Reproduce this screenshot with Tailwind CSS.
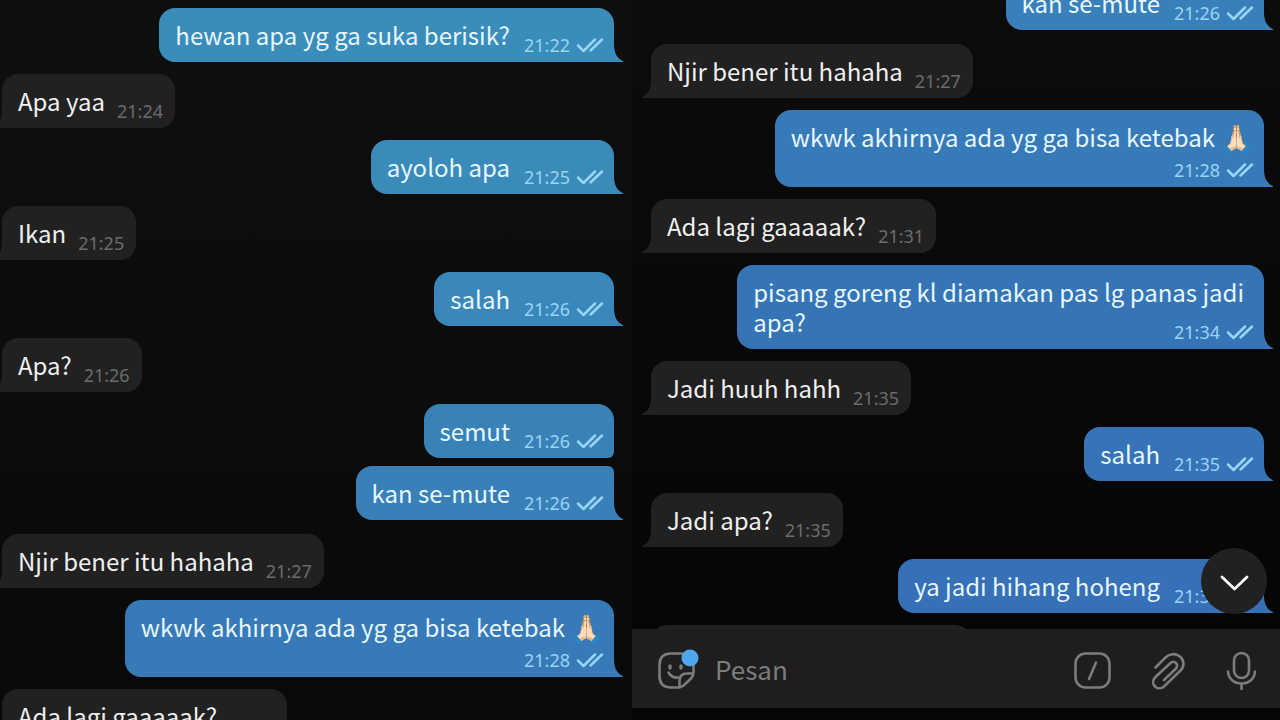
<!DOCTYPE html>
<html lang="id">
<head>
  <meta charset="UTF-8" />
  <meta name="viewport" content="width=device-width, initial-scale=1.0" />
  <title>Chat</title>
  <script src="https://cdn.jsdelivr.net/npm/@tailwindcss/browser@4"></script>
</head>
<body class="bg-[#070707] font-['Noto_Sans_CJK_SC','Noto_Sans',sans-serif] text-2xl leading-[30px] text-[#f0f0f0]">
  <!-- shared shapes -->
  <svg class="hidden">
    <symbol id="tail" viewBox="0 0 10 18">
      <path d="M0 0 C0 9 3 14.500 9 17 Q10 18 8 18 H0 Z" fill="currentColor" />
    </symbol>
    <symbol id="ticks" viewBox="0 0 28 16" fill="none" stroke="currentColor" stroke-width="2.500" stroke-linecap="round" stroke-linejoin="round">
      <path d="M2 8.500 L7.500 14 L19 2.500" />
      <path d="M14.500 13.500 L26 2.500" />
    </symbol>
  </svg>

  <div class="grid h-screen grid-cols-[79fr_81fr] overflow-hidden">
    <!-- first chat -->
    <main class="flex flex-col items-start gap-3 overflow-hidden bg-linear-to-b from-[#0f0f0f] to-[#090909] pt-2 pr-[18px] pl-0.5 whitespace-nowrap">
      <div class="relative flex shrink-0 items-end self-end rounded-2xl rounded-br-none bg-[#3a8cba] pt-3 pr-2.5 pb-[7px] pl-4 text-[#e6f7ff]">
        <p class="mb-[5px]">hewan apa yg ga suka berisik?</p>
        <div class="ml-3.5 flex items-center gap-1.5 text-[#98d4f5]">
          <time class="font-['Noto_Sans'] text-lg leading-5">21:22</time>
          <svg class="h-4 w-7"><use href="#ticks" /></svg>
        </div>
        <svg class="absolute bottom-0 left-full h-[18px] w-2.5 text-[#3a8cba]"><use href="#tail" /></svg>
      </div>

      <div class="relative flex shrink-0 items-end rounded-2xl rounded-bl-none bg-[#212121] pt-3 pr-3 pb-[7px] pl-4">
        <p class="mb-[5px]">Apa yaa</p>
        <time class="ml-3 font-['Noto_Sans'] text-lg leading-5 text-[#6c6c6c]">21:24</time>
        <svg class="absolute right-full bottom-0 h-[18px] w-2.5 -scale-x-100 text-[#212121]"><use href="#tail" /></svg>
      </div>

      <div class="relative flex shrink-0 items-end self-end rounded-2xl rounded-br-none bg-[#3a8aba] pt-3 pr-2.5 pb-[7px] pl-4 text-[#e6f7ff]">
        <p class="mb-[5px]">ayoloh apa</p>
        <div class="ml-3.5 flex items-center gap-1.5 text-[#98d4f5]">
          <time class="font-['Noto_Sans'] text-lg leading-5">21:25</time>
          <svg class="h-4 w-7"><use href="#ticks" /></svg>
        </div>
        <svg class="absolute bottom-0 left-full h-[18px] w-2.5 text-[#3a8aba]"><use href="#tail" /></svg>
      </div>

      <div class="relative flex shrink-0 items-end rounded-2xl rounded-bl-none bg-[#212121] pt-3 pr-3 pb-[7px] pl-4">
        <p class="mb-[5px]">Ikan</p>
        <time class="ml-3 font-['Noto_Sans'] text-lg leading-5 text-[#6c6c6c]">21:25</time>
        <svg class="absolute right-full bottom-0 h-[18px] w-2.5 -scale-x-100 text-[#212121]"><use href="#tail" /></svg>
      </div>

      <div class="relative flex shrink-0 items-end self-end rounded-2xl rounded-br-none bg-[#3a87bb] pt-3 pr-2.5 pb-[7px] pl-4 text-[#e6f7ff]">
        <p class="mb-[5px]">salah</p>
        <div class="ml-3.5 flex items-center gap-1.5 text-[#98d4f5]">
          <time class="font-['Noto_Sans'] text-lg leading-5">21:26</time>
          <svg class="h-4 w-7"><use href="#ticks" /></svg>
        </div>
        <svg class="absolute bottom-0 left-full h-[18px] w-2.5 text-[#3a87bb]"><use href="#tail" /></svg>
      </div>

      <div class="relative flex shrink-0 items-end rounded-2xl rounded-bl-none bg-[#212121] pt-3 pr-3 pb-[7px] pl-4">
        <p class="mb-[5px]">Apa?</p>
        <time class="ml-3 font-['Noto_Sans'] text-lg leading-5 text-[#6c6c6c]">21:26</time>
        <svg class="absolute right-full bottom-0 h-[18px] w-2.5 -scale-x-100 text-[#212121]"><use href="#tail" /></svg>
      </div>

      <!-- two messages sent in a row -->
      <div class="mb-0.5 flex shrink-0 flex-col items-end gap-2 self-end text-[#e6f7ff]">
        <div class="flex items-end rounded-2xl rounded-br-md bg-[#3982b8] pt-3 pr-2.5 pb-[7px] pl-4">
          <p class="mb-[5px]">semut</p>
          <div class="ml-3.5 flex items-center gap-1.5 text-[#98d4f5]">
            <time class="font-['Noto_Sans'] text-lg leading-5">21:26</time>
            <svg class="h-4 w-7"><use href="#ticks" /></svg>
          </div>
        </div>
        <div class="relative flex items-end rounded-2xl rounded-tr-md rounded-br-none bg-[#3980b8] pt-3 pr-2.5 pb-[7px] pl-4">
          <p class="mb-[5px]">kan se-mute</p>
          <div class="ml-3.5 flex items-center gap-1.5 text-[#98d4f5]">
            <time class="font-['Noto_Sans'] text-lg leading-5">21:26</time>
            <svg class="h-4 w-7"><use href="#ticks" /></svg>
          </div>
          <svg class="absolute bottom-0 left-full h-[18px] w-2.5 text-[#3980b8]"><use href="#tail" /></svg>
        </div>
      </div>

      <div class="relative flex shrink-0 items-end rounded-2xl rounded-bl-none bg-[#212121] pt-3 pr-3 pb-[7px] pl-4">
        <p class="mb-[5px]">Njir bener itu hahaha</p>
        <time class="ml-3 font-['Noto_Sans'] text-lg leading-5 text-[#6c6c6c]">21:27</time>
        <svg class="absolute right-full bottom-0 h-[18px] w-2.5 -scale-x-100 text-[#212121]"><use href="#tail" /></svg>
      </div>

      <div class="relative flex shrink-0 flex-col items-end self-end rounded-2xl rounded-br-none bg-[#377ab7] pt-3 pr-2.5 pb-[7px] pl-4 text-[#e6f7ff]">
        <p class="flex h-[30px]">wkwk akhirnya ada yg ga bisa ketebak<span class="ml-1 text-[28px]">🙏🏻</span></p>
        <div class="mt-2 flex items-center gap-1.5 text-[#98d4f5]">
          <time class="font-['Noto_Sans'] text-lg leading-5">21:28</time>
          <svg class="h-4 w-7"><use href="#ticks" /></svg>
        </div>
        <svg class="absolute bottom-0 left-full h-[18px] w-2.5 text-[#377ab7]"><use href="#tail" /></svg>
      </div>

      <div class="relative flex shrink-0 items-end rounded-2xl rounded-bl-none bg-[#212121] pt-3 pr-3 pb-[7px] pl-4">
        <p class="mb-[5px]">Ada lagi gaaaaak?</p>
        <time class="ml-3 font-['Noto_Sans'] text-lg leading-5 text-[#6c6c6c]">21:31</time>
      </div>
    </main>

    <!-- second chat, with the message box -->
    <section class="flex min-h-0 flex-col bg-linear-to-b from-[#0c0c0c] to-[#050505] pb-3">
      <main class="relative min-h-0 flex-1 overflow-hidden">
        <div class="-mt-6 flex flex-col items-start gap-3 pr-4 pl-[19px] whitespace-nowrap">
          <div class="relative mb-0.5 flex items-end self-end rounded-2xl rounded-br-none bg-[#3980ba] pt-3 pr-2.5 pb-[7px] pl-4 text-[#e6f7ff]">
            <p class="mb-[5px]">kan se-mute</p>
            <div class="ml-3.5 flex items-center gap-1.5 text-[#98d4f5]">
              <time class="font-['Noto_Sans'] text-lg leading-5">21:26</time>
              <svg class="h-4 w-7"><use href="#ticks" /></svg>
            </div>
            <svg class="absolute bottom-0 left-full h-[18px] w-2.5 text-[#3980ba]"><use href="#tail" /></svg>
          </div>

          <div class="relative flex items-end rounded-2xl rounded-bl-none bg-[#212121] pt-3 pr-3 pb-[7px] pl-4">
            <p class="mb-[5px]">Njir bener itu hahaha</p>
            <time class="ml-3 font-['Noto_Sans'] text-lg leading-5 text-[#6c6c6c]">21:27</time>
            <svg class="absolute right-full bottom-0 h-[18px] w-2.5 -scale-x-100 text-[#212121]"><use href="#tail" /></svg>
          </div>

          <div class="relative flex flex-col items-end self-end rounded-2xl rounded-br-none bg-[#377ab8] pt-3 pr-2.5 pb-[7px] pl-4 text-[#e6f7ff]">
            <p class="flex h-[30px]">wkwk akhirnya ada yg ga bisa ketebak<span class="ml-1 text-[28px]">🙏🏻</span></p>
            <div class="mt-2 flex items-center gap-1.5 text-[#98d4f5]">
              <time class="font-['Noto_Sans'] text-lg leading-5">21:28</time>
              <svg class="h-4 w-7"><use href="#ticks" /></svg>
            </div>
            <svg class="absolute bottom-0 left-full h-[18px] w-2.5 text-[#377ab8]"><use href="#tail" /></svg>
          </div>

          <div class="relative flex items-end rounded-2xl rounded-bl-none bg-[#212121] pt-3 pr-3 pb-[7px] pl-4">
            <p class="mb-[5px]">Ada lagi gaaaaak?</p>
            <time class="ml-3 font-['Noto_Sans'] text-lg leading-5 text-[#6c6c6c]">21:31</time>
            <svg class="absolute right-full bottom-0 h-[18px] w-2.5 -scale-x-100 text-[#212121]"><use href="#tail" /></svg>
          </div>

          <div class="relative flex flex-col items-end self-end rounded-2xl rounded-br-none bg-[#3675b5] pt-3 pr-2.5 pb-[7px] pl-4 text-[#e6f7ff]">
            <p class="mr-2.5">pisang goreng kl diamakan pas lg panas jadi<br>apa?</p>
            <div class="-mt-[15px] flex items-center gap-1.5 text-[#98d4f5]">
              <time class="font-['Noto_Sans'] text-lg leading-5">21:34</time>
              <svg class="h-4 w-7"><use href="#ticks" /></svg>
            </div>
            <svg class="absolute bottom-0 left-full h-[18px] w-2.5 text-[#3675b5]"><use href="#tail" /></svg>
          </div>

          <div class="relative flex items-end rounded-2xl rounded-bl-none bg-[#212121] pt-3 pr-3 pb-[7px] pl-4">
            <p class="mb-[5px]">Jadi huuh hahh</p>
            <time class="ml-3 font-['Noto_Sans'] text-lg leading-5 text-[#6c6c6c]">21:35</time>
            <svg class="absolute right-full bottom-0 h-[18px] w-2.5 -scale-x-100 text-[#212121]"><use href="#tail" /></svg>
          </div>

          <div class="relative flex items-end self-end rounded-2xl rounded-br-none bg-[#3673b7] pt-3 pr-2.5 pb-[7px] pl-4 text-[#e6f7ff]">
            <p class="mb-[5px]">salah</p>
            <div class="ml-3.5 flex items-center gap-1.5 text-[#98d4f5]">
              <time class="font-['Noto_Sans'] text-lg leading-5">21:35</time>
              <svg class="h-4 w-7"><use href="#ticks" /></svg>
            </div>
            <svg class="absolute bottom-0 left-full h-[18px] w-2.5 text-[#3673b7]"><use href="#tail" /></svg>
          </div>

          <div class="relative flex items-end rounded-2xl rounded-bl-none bg-[#212121] pt-3 pr-3 pb-[7px] pl-4">
            <p class="mb-[5px]">Jadi apa?</p>
            <time class="ml-3 font-['Noto_Sans'] text-lg leading-5 text-[#6c6c6c]">21:35</time>
            <svg class="absolute right-full bottom-0 h-[18px] w-2.5 -scale-x-100 text-[#212121]"><use href="#tail" /></svg>
          </div>

          <div class="relative flex items-end self-end rounded-2xl rounded-br-none bg-[#3670b6] pt-3 pr-2.5 pb-[7px] pl-4 text-[#e6f7ff]">
            <p class="mb-[5px]">ya jadi hihang hoheng</p>
            <div class="ml-3.5 flex items-center gap-1.5 text-[#98d4f5]">
              <time class="font-['Noto_Sans'] text-lg leading-5">21:35</time>
              <svg class="h-4 w-7"><use href="#ticks" /></svg>
            </div>
            <svg class="absolute bottom-0 left-full h-[18px] w-2.5 text-[#3670b6]"><use href="#tail" /></svg>
          </div>

          <div class="h-[54px] w-80 rounded-2xl bg-[#212121]"></div>
        </div>

        <button type="button" aria-label="Ke bawah" class="absolute right-[13px] bottom-[15px] flex size-[66px] items-center justify-center rounded-full bg-[#212121] text-white">
          <svg class="size-8" viewBox="0 0 32 32" fill="none" stroke="currentColor" stroke-width="2.800" stroke-linecap="round" stroke-linejoin="round">
            <path d="M4 12 L16.500 24 L29 12" />
          </svg>
        </button>
      </main>

      <form class="flex h-[79px] shrink-0 items-center bg-[#1e1e1e] pt-1 pr-[19px] pl-[25px] text-[#7c7c7c]">
        <button type="button" aria-label="Stiker" class="shrink-0">
          <svg class="size-10 overflow-visible" viewBox="0 0 40 40" fill="none" stroke="currentColor" stroke-width="2.600" stroke-linecap="round" stroke-linejoin="round">
            <path d="M26 2.500 H14 Q2.500 2.500 2.500 14 V25 Q2.500 36.500 14 36.500 H21 Q24 36.500 26.500 34.500 L34 27.500 Q36.500 25 36.500 21 V13" />
            <path d="M22.500 36 V30 Q22.500 22.500 30 22.500 H36" />
            <path d="M11.500 21.500 Q15 27.500 21.500 26.500" />
            <path d="M13 15 V17 M24 15 V17" stroke-width="3.400" />
            <circle cx="33" cy="7" r="8.500" fill="#4ea6ee" stroke="none" />
          </svg>
        </button>
        <input type="text" aria-label="Pesan" placeholder="Pesan" class="ml-[18px] h-10 min-w-0 flex-1 bg-transparent pb-1 text-[26px] text-white placeholder:text-[#7c7c7c] focus:outline-none" />
        <div class="flex shrink-0 gap-[34px]">
          <button type="button" aria-label="Perintah">
            <svg class="size-10" viewBox="0 0 40 40" fill="none" stroke="currentColor" stroke-width="2.600" stroke-linecap="round">
              <rect x="2.500" y="2.500" width="34" height="34" rx="10" />
              <path d="M23 11.500 L16 28" />
            </svg>
          </button>
          <button type="button" aria-label="Lampirkan">
            <svg class="size-10" viewBox="0 0 40 40" fill="none" stroke="currentColor" stroke-width="2.600" stroke-linecap="round" stroke-linejoin="round">
              <path d="M8.500 16.500 L18.500 6.500 C22.500 2.500 28.500 2 33 5.500 C37.500 9.500 37.500 15.500 33.500 19.500 L17.500 35 C14.500 38 10.500 38 8 35.500 C5.500 33 5.500 29 8.500 26 L23.500 12 C25 10.500 27.500 10.500 29 12 C30.500 13.500 30.500 16 29 17.500 L17 29" />
            </svg>
          </button>
          <button type="button" aria-label="Rekam suara">
            <svg class="size-10" viewBox="0 0 40 40" fill="none" stroke="currentColor" stroke-width="2.600" stroke-linecap="round">
              <rect x="13" y="2" width="15" height="25" rx="7.500" />
              <path d="M7 20.500 C7.500 28 13 32.500 20.500 32.500 C28 32.500 33.500 28 34 20.500 M20.500 32.500 V38" />
            </svg>
          </button>
        </div>
      </form>
    </section>
  </div>
</body>
</html>
